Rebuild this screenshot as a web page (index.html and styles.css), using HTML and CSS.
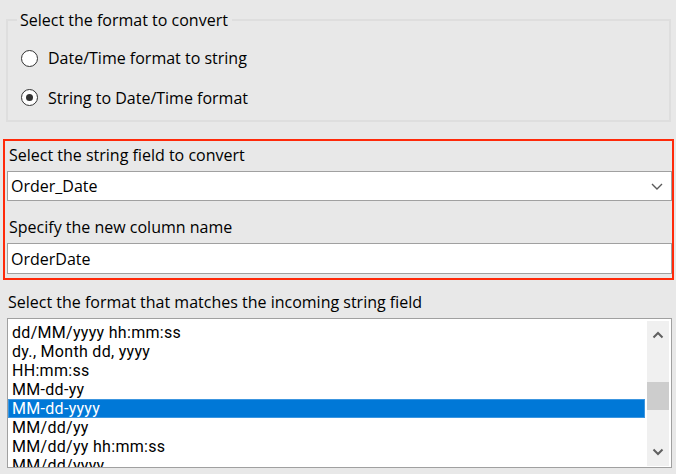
FILE: index.html
```html
<!DOCTYPE html>
<html lang="en">
<head>
  <meta charset="UTF-8" />
  <title>Convert Date/Time</title>
  <link rel="stylesheet" href="styles.css">
</head>
<body>
  <div class="dialog">

    <fieldset class="format-group">
      <legend>Select the format to convert</legend>
      <label class="radio-row">
        <span class="radio"></span>
        Date/Time format to string
      </label>
      <label class="radio-row">
        <span class="radio checked"></span>
        String to Date/Time format
      </label>
    </fieldset>

    <div class="field-box">
      <div class="field-label">Select the string field to convert</div>
      <div class="combo">
        <span>Order_Date</span>
        <svg class="chevron" width="12" height="7" viewBox="0 0 12 7">
          <path d="M1 1 L6 6 L11 1" fill="none" stroke="#5a5a5a" stroke-width="1.4" />
        </svg>
      </div>
      <div class="field-label second">Specify the new column name</div>
      <div class="textbox">OrderDate</div>
    </div>

    <div class="list-label">Select the format that matches the incoming string field</div>
    <div class="listbox">
      <ul class="list-items">
        <li>dd/MM/yyyy hh:mm:ss</li>
        <li>dy., Month dd, yyyy</li>
        <li>HH:mm:ss</li>
        <li>MM-dd-yy</li>
        <li class="selected">MM-dd-yyyy</li>
        <li>MM/dd/yy</li>
        <li>MM/dd/yy hh:mm:ss</li>
        <li>MM/dd/yyyy</li>
      </ul>
      <div class="scrollbar">
        <svg class="arrow" width="12" height="8" viewBox="0 0 12 8">
          <path d="M1.5 6.5 L6 2 L10.5 6.5" fill="none" stroke="#606060" stroke-width="2" />
        </svg>
        <div class="track">
          <div class="thumb"></div>
        </div>
        <svg class="arrow" width="12" height="8" viewBox="0 0 12 8">
          <path d="M1.5 1.5 L6 6 L10.5 1.5" fill="none" stroke="#606060" stroke-width="2" />
        </svg>
      </div>
    </div>

  </div>
</body>
</html>
```

FILE: styles.css
```css
body {
  margin: 0;
  padding: 0;
  background: #e8e8e8;
  font-family: 'Open Sans', 'Noto Sans', sans-serif;
  font-size: 16px;
  color: #000;
}

.dialog {
  width: 676px;
  height: 474px;
  padding-top: 10px;
  box-sizing: border-box;
  overflow: hidden;
}

.format-group {
  margin: 0 5px 0 6px;
  padding: 8px 0 3px 13px;
  border: 2px solid #dedede;
}

.format-group legend {
  padding: 0 4px 0 3px;
  margin-left: -4px;
  line-height: 20px;
}

.radio-row {
  display: flex;
  align-items: center;
  gap: 10px;
  height: 39px;
}

.radio-row:first-of-type {
  height: 40px;
}

.radio {
  width: 15px;
  height: 15px;
  border: 1px solid #333;
  border-radius: 50%;
  background: #fff;
  position: relative;
  box-sizing: content-box;
}

.radio.checked::after {
  content: "";
  position: absolute;
  left: 4px;
  top: 4px;
  width: 7px;
  height: 7px;
  border-radius: 50%;
  background: #333;
}

.field-box {
  margin: 17px 2px 0 3px;
  padding: 4px 0 4px 2px;
  border: 2px solid #ff2a0a;
}

.field-label {
  line-height: 20px;
  padding-left: 2px;
  margin-bottom: 6px;
}

.field-label.second {
  margin-top: 16px;
}

.combo,
.textbox {
  display: flex;
  align-items: center;
  justify-content: space-between;
  height: 30px;
  padding: 0 8px 0 3px;
  background: #fff;
  border: 1px solid #a0a0a0;
  box-sizing: border-box;
}

.textbox {
  height: 31px;
}

.list-label {
  line-height: 20px;
  margin: 12px 0 6px 8px;
}

.listbox {
  display: flex;
  height: 150px;
  margin: 0 4px 0 7px;
  border: 1px solid #a0a0a0;
  background: #fff;
  box-sizing: border-box;
  overflow: hidden;
}

.list-items {
  flex: 1;
  list-style: none;
  margin: 0;
  padding: 4px 0 0 0;
  font-family: Roboto, 'Open Sans', sans-serif;
  font-size: 16px;
  letter-spacing: 0.3px;
}

.list-items li {
  height: 19px;
  line-height: 19px;
  padding-left: 4px;
  white-space: nowrap;
}

.list-items li.selected {
  background: #0078d7;
  color: #fff;
  margin-right: 2px;
  box-shadow: inset 0 0 0 1px #3c96e0;
}

.scrollbar {
  display: flex;
  flex-direction: column;
  align-items: center;
  width: 22px;
  margin: 2px 2px 1px 0;
  background: #f0f0f0;
}

.scrollbar .arrow {
  margin: 10px 0;
}

.track {
  flex: 1;
  align-self: stretch;
  padding-top: 33px;
}

.thumb {
  height: 28px;
  background: #cdcdcd;
}
```
